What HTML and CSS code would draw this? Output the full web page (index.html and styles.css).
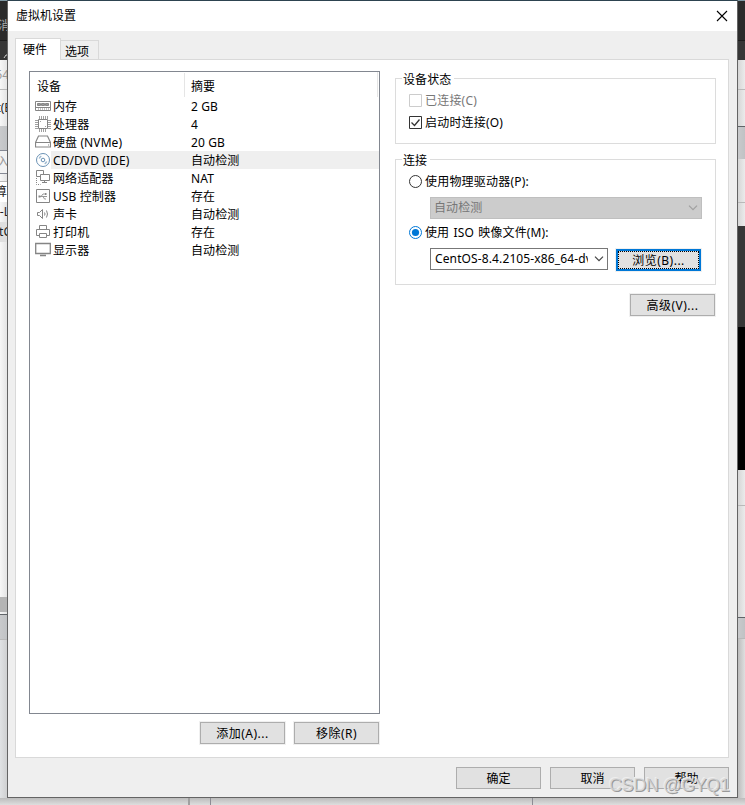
FILE: index.html
```html
<!DOCTYPE html>
<html lang="zh-CN">
<head>
<meta charset="utf-8">
<title>虚拟机设置</title>
<link rel="stylesheet" href="styles.css">
</head>
<body>
<div class="desktop">
  <div class="edge edge-left">
    <i class="sky"></i>
    <div class="dark h40"><span class="clip t-gray">连消</span></div>
    <div class="dark2 h19"><svg width="7" height="19"><path d="M4 17l2-3h2" stroke="#ccc" fill="none"/></svg></div>
    <div class="pale h30 line-b"><span class="clip t-faint">64</span></div>
    <div class="pale h36"><span class="clip bleed-e">t(E</span></div>
    <div class="silver h24"></div>
    <div class="field h24"><span class="clip t-faint">入</span></div>
    <div class="pale h8 line-b"></div>
    <div class="white h20"><span class="clip">算</span></div>
    <div class="pale h20"><span class="clip bleed-l">-L</span></div>
    <div class="row-sel h20"><span class="clip bleed-c">tC</span></div>
    <div class="pale grow"></div>
    <div class="thumb h15"></div>
    <div class="pale h3 line-d"></div>
    <div class="silver h25 line-b"></div>
    <div class="floor h165"></div>
  </div>
  <main class="dialog">
    <header class="title"><span>虚拟机设置</span>
      <svg width="12" height="12" viewBox="0 0 12 12"><path d="M1 1l10 10M11 1L1 11" stroke="#000" stroke-width="1.1"/></svg>
    </header>
    <div class="body">
      <nav class="tabs"><span class="tab active">硬件</span><span class="tab">选项</span></nav>
      <div class="panel">
        <section class="hardware">
          <div class="list">
            <div class="list-head"><span>设备</span><span>摘要</span></div>
            <div class="item"><svg class="ic" viewBox="0 0 16 18"><path d="M.5 4.500h15v9H.5zM.5 10.500h15M3 12h1m1 0h1m1 0h1m1 0h1m1 0h1m1 0h1"/><path fill="#999" d="M2.500 6.500h3v2h-3zM6.500 6.500h3v2h-3zM10.500 6.500h3v2h-3z"/></svg><b>内存</b><em>2 GB</em></div>
            <div class="item"><svg class="ic" viewBox="0 0 16 18"><path d="M3.500 4.500h9v9h-9z"/><path stroke="#a0a0a0" d="M4.500 1v3m2-3v3m2-3v3m2-3v3m2-3v3M4.500 14v3m2-3v3m2-3v3m2-3v3M0 5.500h3m-3 2h3m-3 2h3m-3 2h3m-3 2h3M13 5.500h3m-3 2h3m-3 2h3m-3 2h3m-3 2h3M5 6.500h1m4 5h1"/></svg><b>处理器</b><em>4</em></div>
            <div class="item"><svg class="ic" viewBox="0 0 16 18"><path d="M.5 9.500l3-6.500h9l3 6.500v4.500H.5zM.5 9.500h15M13 12h1" stroke-width="1.200"/></svg><b>硬盘 (NVMe)</b><em>20 GB</em></div>
            <div class="item selected"><svg class="ic disc" viewBox="0 0 16 18"><circle cx="8" cy="9" r="6.500"/><circle cx="8" cy="9" r="1.800"/><path d="M4.300 7.500a4.200 4.200 0 0 1 2-2.300M11.700 10.500a4.200 4.200 0 0 1-2 2.300" stroke-width="1.500" stroke="#9db9d0"/></svg><b>CD/DVD (IDE)</b><em>自动检测</em></div>
            <div class="item"><svg class="ic" viewBox="0 0 16 18"><path d="M5.500 5.500h9v6h-9zM7 13.500h5M9.500 11.500v2"/><path d="M5 7.500H1.500v-6h7v4"/><path d="M1.500 9v6.500h4" stroke-dasharray="1 1"/></svg><b>网络适配器</b><em>NAT</em></div>
            <div class="item"><svg class="ic" viewBox="0 0 16 18"><path d="M1.500 2.500h13v13h-13z"/><path d="M4 9.500h8M6 9.500l2-2.500h2M8 9.500l1.500 2.500h1.500" stroke="#999"/><path fill="#888" stroke="none" d="M3.500 8.500h2v2h-2zM10 6h1.500v2H10z"/></svg><b>USB 控制器</b><em>存在</em></div>
            <div class="item"><svg class="ic" viewBox="0 0 16 18"><path d="M2.500 7.500h2l3-3v9l-3-3h-2zM9.500 7.500q1 1.500 0 3M11.500 5.500q2 3.500 0 7"/></svg><b>声卡</b><em>自动检测</em></div>
            <div class="item"><svg class="ic" viewBox="0 0 16 18"><path d="M4.500 6.500v-4h7v4M4 12.500H1.500v-6h13v6H12M4.500 10.500h7v4h-7z"/></svg><b>打印机</b><em>存在</em></div>
            <div class="item"><svg class="ic" viewBox="0 0 16 18"><path d="M.7 2.500h14.600v10H.7zM5 14.500h6" stroke-width="1.300"/></svg><b>显示器</b><em>自动检测</em></div>
          </div>
          <div class="actions"><button>添加(A)...</button><button>移除(R)</button></div>
        </section>
        <section class="settings">
          <div class="group status">
            <h2>设备状态</h2>
            <label class="opt off"><svg width="13" height="13"><path d="M.5.5h12v12H.5z" fill="#fff" stroke="#ccc"/></svg>已连接(C)</label>
            <label class="opt second"><svg width="13" height="13"><path d="M.5.5h12v12H.5z" fill="#fff" stroke="#333"/><path d="M2.500 6.500l3 3 5-6" fill="none" stroke="#333" stroke-width="1.300"/></svg>启动时连接(O)</label>
          </div>
          <div class="group connect">
            <h2>连接</h2>
            <label class="opt"><svg width="13" height="13"><circle cx="6.500" cy="6.500" r="6" fill="#fff" stroke="#333"/></svg>使用物理驱动器(P):</label>
            <div class="combo disabled"><span>自动检测</span><svg width="10" height="6"><path d="M1 .7l4 4 4-4" fill="none" stroke="#a0a0a0" stroke-width="1.200"/></svg></div>
            <label class="opt image"><svg width="13" height="13"><circle cx="6.500" cy="6.500" r="6" fill="#fff" stroke="#0078d7"/><circle cx="6.500" cy="6.500" r="3.600" fill="#0078d7"/></svg><span>使用 ISO 映像文件(M):</span></label>
            <div class="iso"><div class="combo"><span>CentOS-8.4.2105-x86_64-dvd1.iso</span><svg width="10" height="6"><path d="M1 .7l4 4 4-4" fill="none" stroke="#444" stroke-width="1.200"/></svg></div><button class="focus">浏览(B)...</button></div>
          </div>
          <button class="advanced">高级(V)...</button>
        </section>
      </div>
      <footer class="footer"><button>确定</button><button>取消</button><button>帮助</button></footer>
    </div>
  </main>
  <div class="edge edge-right">
    <i class="sky"></i>
    <div class="dark h40"></div>
    <div class="dark2 h19"></div>
    <div class="shade h30 line-b"></div>
    <div class="shade h37 line-d"></div>
    <div class="silver h32"></div>
    <div class="shade h44 line-b"></div>
    <div class="shade h23"></div>
    <div class="dark2 h101"></div>
    <div class="black h143"></div>
    <div class="shade h36 line-b"></div>
    <div class="shade h112 line-d"></div>
    <div class="silver h21 line-b"></div>
    <div class="floor grow"></div>
  </div>
  <div class="bottom"><i class="b1"></i><i class="b2"></i><i class="b3"></i><i class="b4"></i></div>
  <div class="watermark">CSDN @GYQ1</div>
</div>
</body>
</html>
```
FILE: styles.css
```css
* { box-sizing: border-box; }
body { margin: 0; overflow: hidden; font: 12px/18px "Noto Sans", "Noto Sans CJK SC", sans-serif; color: #000; }
h2, b, em { font: inherit; margin: 0; }
i { display: block; }
.desktop { position: relative; width: 745px; height: 805px; display: grid; grid-template: 798px 7px / 7px 731px 7px; background: #dedede; }

/* windows showing behind the dialog */
.edge { display: flex; flex-direction: column; overflow: hidden; }
.edge > div { flex: none; overflow: hidden; display: flex; align-items: center; justify-content: flex-end; }
.edge > .grow { flex: 1; }
.clip { flex: none; white-space: nowrap; color: #222; }
.bleed-e { margin-right: -4px; }
.bleed-l { margin-right: -3px; }
.bleed-c { margin-right: -4px; }
.clip.t-gray { color: #aaa; margin: 10px -3px 0 0; }
.clip.t-faint { color: #999; margin-right: -2px; }
.sky { height: 1px; background: #7e98a4; }
.dark { background: #2b2b2b; border-bottom: 1px solid #1c1c1c; }
.dark2 { background: #363636; }
.black { background: #000; }
.white { background: #fff; }
.pale { background: linear-gradient(90deg, #f7f7f7, #e4e4e4); }
.shade { background: linear-gradient(90deg, #d6d6d6, #ebebeb); }
.silver { background: linear-gradient(90deg, #c9cacc, #c0c2c4); }
.row-sel { background: #dfdfdf; }
.thumb { background: #b4b4b4; }
.field { background: #f2f2f2; border: 1px solid #858994; border-width: 1px 0; }
.floor { background: linear-gradient(90deg, #e0e2e4, #cfd0d1); }
.edge-right .floor { background: linear-gradient(90deg, #bcbcbc, #dfdfdf); }
.line-b { border-bottom: 1px solid #b9b9b9; }
.line-d { border-bottom: 1px solid #606468; }
.h3 { height: 3px; } .h8 { height: 8px; } .h15 { height: 15px; } .h19 { height: 19px; }
.h20 { height: 20px; } .h21 { height: 21px; } .h23 { height: 23px; } .h24 { height: 24px; }
.h25 { height: 25px; } .h30 { height: 30px; } .h32 { height: 32px; } .h36 { height: 36px; }
.h37 { height: 37px; } .h40 { height: 40px; } .h44 { height: 44px; } .h101 { height: 101px; }
.h112 { height: 112px; } .h143 { height: 143px; } .h165 { height: 158px; }
.bottom { grid-column: 1 / 4; display: flex; background: linear-gradient(#bcbcbc, #dedede); }
.b1 { width: 118px; } .b2 { width: 72px; border-right: 2px solid #a0a0a0; }
.b3 { width: 21px; border-right: 1px solid #8c8c94; } .b4 { width: 322px; border-right: 1px solid #8c8c94; }

/* dialog */
.dialog { border: 1px solid #646464; border-top-color: #2d4350; background: #efefef; display: flex; flex-direction: column; }
.title { height: 30px; background: #fff; display: flex; justify-content: space-between; align-items: center; padding: 0 8px; }
.title svg { margin-right: 1px; }
.body { flex: 1; padding: 7px 8px 0 7px; display: flex; flex-direction: column; }
.tabs { height: 21px; display: flex; align-items: flex-end; }
.tab { width: 38px; height: 19px; border: 1px solid #d9d9d9; border-left: 0; border-bottom: 0; padding: 2px 0 0 4px; }
.tab.active { width: 46px; height: 22px; border-left: 1px solid #d9d9d9; border-right: 1px solid #d9d9d9; background: #fff; margin-bottom: -1px; padding: 2px 0 0 7px; z-index: 1; }
.panel { width: 714px; height: 699px; border: 1px solid #d9d9d9; background: #fff; display: flex; padding: 11px 12px 0 13px; }
.hardware { width: 351px; }
.list { height: 643px; border: 1px solid #828790; }
.list-head { height: 25px; display: flex; margin: 0 1px 0 0; border-right: 1px solid #e5e5e5; line-height: 29px; }
.list-head span:first-child { width: 155px; padding-left: 7px; border-right: 1px solid #e5e5e5; margin-top: 1px; line-height: 27px; }
.list-head span:last-child { padding-left: 6px; }
.item { height: 18px; display: flex; padding-left: 5px; line-height: 20px; }
.item b { width: 139px; padding-left: 2px; white-space: nowrap; letter-spacing: .1px; }
.item em { flex: 1; padding-left: 1px; letter-spacing: .1px; }
.selected b, .selected em { background: #efefef; }
.ic { width: 16px; height: 18px; flex: none; fill: none; stroke: #858585; }
.disc { stroke: #6b92b5; }
.actions { display: flex; justify-content: flex-end; gap: 9px; margin: 8px 1px 0 0; }
button { width: 85px; height: 22px; flex: none; border: 1px solid #adadad; background: #e1e1e1; padding: 2px 0 0; font: inherit; line-height: 18px; letter-spacing: .5px; color: #000; box-shadow: 0 0 0 1px #f0f0f0; }

.settings { width: 321px; margin-left: 15px; display: flex; flex-direction: column; }
.group { border: 1px solid #dcdcdc; padding: 0 13px; }
.group h2 { width: max-content; height: 18px; line-height: 20px; background: #fff; margin: -9px 0 0 -7px; padding: 0 3px 0 1px; letter-spacing: .1px; }
.status { height: 66px; margin-top: 7px; }
.connect { height: 126px; margin-top: 15px; }
.opt { display: flex; align-items: center; height: 21px; gap: 3px; margin-top: 2px; letter-spacing: .2px; }
.opt.second { margin-top: 1px; }
.opt.image { margin-top: 3px; }
.image span { word-spacing: 1.200px; letter-spacing: .1px; }
.off { color: #777; }
.combo { width: 178px; height: 22px; border: 1px solid #777; background: #fff; display: flex; align-items: center; justify-content: space-between; padding: 0 3px 0 4px; }
.combo span { overflow: hidden; white-space: nowrap; width: 153px; letter-spacing: .12px; }
.combo.disabled { width: 272px; margin: 5px 0 0 21px; background: #ccc; border-color: #bfbfbf; color: #777; padding-left: 3px; }
.iso { display: flex; gap: 8px; margin: 5px 0 0 21px; }
.focus { margin-top: 1px; border: 2px solid #0078d7; outline: 1px dotted #000; outline-offset: -3px; padding-top: 1px; }
.advanced { align-self: flex-end; margin-top: 9px; margin-right: 1px; }
.footer { display: flex; justify-content: flex-end; gap: 9px; margin-top: 9px; }
.footer button { box-shadow: none; letter-spacing: 0; }
.watermark { position: absolute; left: 609px; top: 773px; font: 18px/24px "Liberation Sans", sans-serif; letter-spacing: -.4px; white-space: nowrap; color: rgba(215, 215, 215, .8); text-shadow: 1px 1px 0 #999, -1px -1px 0 #eee; }
```
